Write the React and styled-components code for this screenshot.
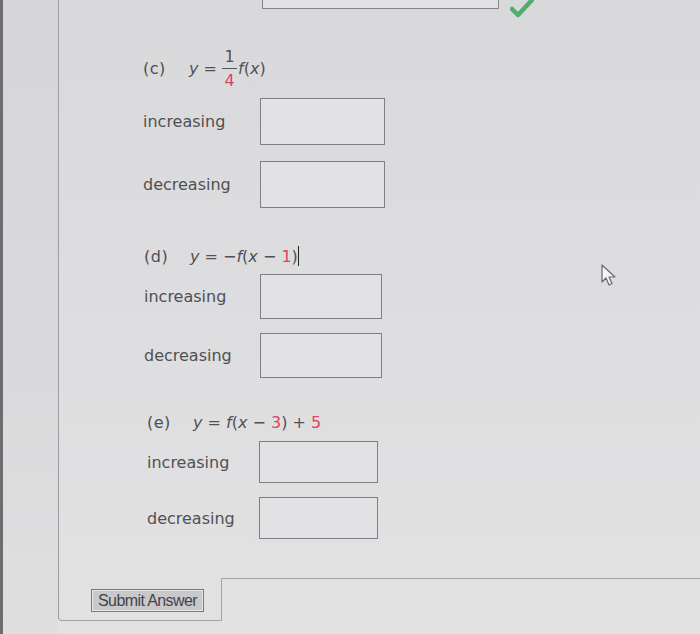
import React from "react";
import styled, { createGlobalStyle } from "styled-components";

const GlobalStyle = createGlobalStyle`
  html, body { margin: 0; padding: 0; }
  body { background: #e4e4e5; font-family: "DejaVu Sans", Verdana, sans-serif; }
`;

const Page = styled.div`
  position: relative;
  width: 700px;
  height: 634px;
  overflow: hidden;
  box-sizing: border-box;
  border-left: 3px solid #6d6d70;
  background: linear-gradient(180deg, #d9d9dc 0%, #dedee0 55%, #e2e2e3 100%);
  display: flex;
`;

const Gutter = styled.div`
  width: 55px;
  flex: none;
  background: linear-gradient(180deg, #d6d6d9 0%, #dadadc 60%, #dfdfe0 100%);
`;

const Main = styled.div`
  flex: 1;
  display: flex;
  flex-direction: column;
`;

const Content = styled.div`
  height: 578px;
  box-sizing: border-box;
  border-left: 1px solid #9c9ca2;
  padding-left: 84px;
  display: flex;
  flex-direction: column;
`;

const TopRow = styled.div`
  height: 20px;
  display: flex;
  align-items: flex-start;
  padding-left: 119px;
`;

const TopBox = styled.div`
  width: 235px;
  height: 8px;
  border: 1px solid #86868a;
  border-top: none;
  background: #e1e1e3;
`;

const Check = styled.svg`
  margin-left: 11px;
  margin-top: -2px;
`;

const Section = styled.div`
  display: flex;
  flex-direction: column;
  margin-top: ${(p) => p.$top}px;
  padding-left: ${(p) => p.$indent}px;
`;

const Header = styled.div`
  display: flex;
  align-items: center;
  height: ${(p) => p.$h}px;
  font-size: 16px;
  color: #4e4e52;
`;

const Part = styled.span`
  width: ${(p) => p.$w}px;
  letter-spacing: 0.5px;
`;

const Math = styled.span`
  display: inline-flex;
  align-items: center;
  white-space: pre;
  color: #505055;
`;

const It = styled.i`
  font-family: "DejaVu Sans", sans-serif;
  font-style: oblique;
`;

const Red = styled.span`
  color: #d9465e;
`;

const Frac = styled.span`
  display: inline-flex;
  flex-direction: column;
  align-items: center;
  font-size: 16px;
  line-height: 19px;
  margin: 0 1px 0 0;
`;

const FracBar = styled.span`
  width: 15px;
  height: 1px;
  background: #555;
  margin: 2px 0 2px;
`;

const Caret = styled.span`
  display: inline-block;
  width: 1px;
  height: 20px;
  background: #222;
`;

const Row = styled.div`
  display: flex;
  align-items: center;
  margin-top: ${(p) => p.$top}px;
`;

const Label = styled.span`
  width: ${(p) => p.$w}px;
  font-size: 16px;
  color: #505054;
`;

const AnswerBox = styled.div`
  box-sizing: border-box;
  width: ${(p) => p.$w}px;
  height: ${(p) => p.$h}px;
  border: 1px solid #7f7f83;
  background: #e2e2e4;
`;

const Footer = styled.div`
  display: flex;
  height: 56px;
`;

const Tab = styled.div`
  width: 164px;
  height: 43px;
  box-sizing: border-box;
  border-left: 1px solid #9c9ca2;
  border-right: 1px solid #a4a4a8;
  border-bottom: 1px solid #a4a4a8;
  border-bottom-left-radius: 4px;
  padding: 11px 0 0 32px;
`;

const Filler = styled.div`
  flex: 1;
  border-top: 1px solid #a8a8ac;
  height: 43px;
`;

const SubmitButton = styled.button`
  font-family: "Liberation Sans", Arial, sans-serif;
  font-size: 16px;
  letter-spacing: -0.6px;
  color: #444448;
  background: #c9c9cc;
  border: 1px solid #7a7a7e;
  box-shadow: inset 0 0 0 1px #e6e6e8;
  width: 113px;
  height: 23px;
  padding: 0;
  line-height: 21px;
`;

const Pointer = styled.svg`
  position: absolute;
  left: 597px;
  top: 263px;
`;

function Question({ part, math, top, indent, headerH, rowTop, gap, labelW, boxW, boxH }) {
  return (
    <Section $top={top} $indent={indent}>
      <Header $h={headerH}>
        <Part $w={46}>{part}</Part>
        <Math>{math}</Math>
      </Header>
      <Row $top={rowTop}>
        <Label $w={labelW}>increasing</Label>
        <AnswerBox $w={boxW} $h={boxH} />
      </Row>
      <Row $top={gap}>
        <Label $w={labelW}>decreasing</Label>
        <AnswerBox $w={boxW} $h={boxH} />
      </Row>
    </Section>
  );
}

export default function App() {
  return (
    <>
      <GlobalStyle />
      <Page>
        <Gutter />
        <Main>
          <Content>
            <TopRow>
              <TopBox />
              <Check width="24" height="21" viewBox="0 0 24 21">
                <path d="M2 11 L8 17 L22 2" fill="none" stroke="#4fae6c" strokeWidth="4.5" strokeLinecap="round" strokeLinejoin="round" />
              </Check>
            </TopRow>
            <Question
              part="(c)"
              math={
                <>
                  <It>y</It>{" = "}
                  <Frac>
                    <span>1</span>
                    <FracBar />
                    <Red>4</Red>
                  </Frac>
                  <It>f</It>(<It>x</It>)
                </>
              }
              top={27}
              indent={0}
              headerH={43}
              rowTop={8}
              gap={16}
              labelW={117}
              boxW={125}
              boxH={47}
            />
            <Question
              part="(d)"
              math={
                <>
                  <It>y</It>{" = −"}<It>f</It>(<It>x</It>{" − "}<Red>1</Red>)<Caret />
                </>
              }
              top={37}
              indent={1}
              headerH={22}
              rowTop={7}
              gap={14}
              labelW={116}
              boxW={122}
              boxH={45}
            />
            <Question
              part="(e)"
              math={
                <>
                  <It>y</It>{" = "}<It>f</It>(<It>x</It>{" − "}<Red>3</Red>{") + "}<Red>5</Red>
                </>
              }
              top={33}
              indent={4}
              headerH={22}
              rowTop={8}
              gap={14}
              labelW={112}
              boxW={119}
              boxH={42}
            />
          </Content>
          <Footer>
            <Tab>
              <SubmitButton>Submit Answer</SubmitButton>
            </Tab>
            <Filler />
          </Footer>
        </Main>
        <Pointer width="18" height="24" viewBox="0 0 18 24">
          <path d="M2 2 L2 19 L6 15 L9 22 L12 20.5 L9 14 L15 14 Z" fill="#f4f4f4" stroke="#6a6a6e" strokeWidth="1.2" strokeLinejoin="round" />
        </Pointer>
      </Page>
    </>
  );
}
